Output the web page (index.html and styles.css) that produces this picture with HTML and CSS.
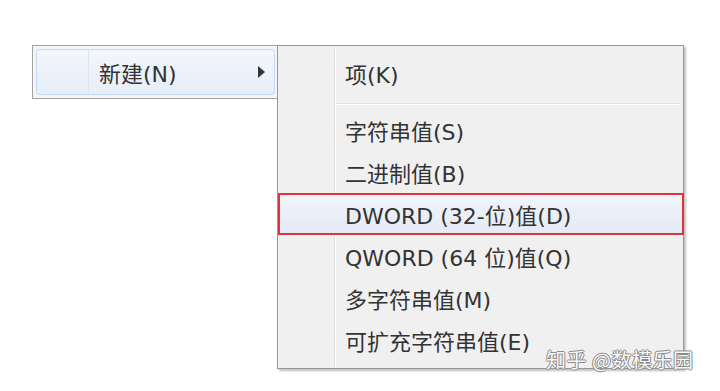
FILE: index.html
```html
<!DOCTYPE html>
<html lang="zh-CN">
<head>
    <meta charset="UTF-8">
    <meta name="viewport" content="width=device-width, initial-scale=1.0">
    <title>新建 菜单</title>
    <link rel="stylesheet" href="styles.css">
</head>
<body>
    <div class="stage">
        <!-- context menu -->
        <div class="menu">
            <div class="menu-item">
                <span class="icon-col"></span>
                <span class="label">新建(N)</span>
                <span class="arrow"></span>
            </div>
        </div>

        <!-- submenu -->
        <div class="submenu">
            <div class="sub-item">项(K)</div>
            <div class="sep"></div>
            <div class="sub-item">字符串值(S)</div>
            <div class="sub-item">二进制值(B)</div>
            <div class="sub-item selected">DWORD (32-位)值(D)</div>
            <div class="sub-item">QWORD (64 位)值(Q)</div>
            <div class="sub-item">多字符串值(M)</div>
            <div class="sub-item">可扩充字符串值(E)</div>
        </div>
    </div>

    <div class="watermark">知乎 @数模乐园</div>
</body>
</html>
```

FILE: styles.css
```css
body {
    margin: 0;
    background: #ffffff;
    font-family: "DejaVu Sans", "Noto Sans CJK SC", sans-serif;
    color: #333333;
    width: 720px;
    height: 391px;
    position: relative;
    overflow: hidden;
}
.stage {
    display: flex;
    align-items: flex-start;
    padding: 45px 0 0 32px;
}
.menu {
    width: 246px;
    height: 54px;
    box-sizing: border-box;
    border: 1px solid #a3a3a3;
    background: #f4f5f6;
    padding: 3px 2px 3px 3px;
}
.menu-item {
    height: 46px;
    box-sizing: border-box;
    border: 1px solid #c4daf3;
    border-radius: 3px;
    background: linear-gradient(#f3f7fc, #e6eef9);
    display: flex;
    align-items: center;
}
.icon-col {
    width: 51px;
    height: 100%;
    border-right: 1px solid #dbe5f1;
}
.menu-item .label {
    flex: 1;
    padding-left: 10px;
    font-size: 22px;
}
.arrow {
    width: 0;
    height: 0;
    border-left: 7px solid #333;
    border-top: 6px solid transparent;
    border-bottom: 6px solid transparent;
    margin-right: 9px;
}
.submenu {
    margin-left: -1px;
    width: 407px;
    height: 324px;
    box-sizing: border-box;
    border: 1px solid #979797;
    padding: 6px 0;
    background: linear-gradient(to right, #f0f0f0 56px, #e0e0e0 56px, #e0e0e0 57px, #ffffff 57px, #ffffff 58px, #f0f0f0 58px);
    box-shadow: 2px 2px 2px rgba(0, 0, 0, 0.25);
}
.sub-item {
    height: 42px;
    box-sizing: border-box;
    padding-left: 67px;
    display: flex;
    align-items: center;
    font-size: 22px;
}
.sub-item.selected {
    border: 2px solid #e0343d;
    padding-left: 65px;
    margin-right: -1px;
    background: linear-gradient(#f0f4fa, #e4ebf5);
}
.sep {
    margin: 9px 3px 4px 58px;
    border-top: 1px solid #e0e0e0;
    border-bottom: 1px solid #ffffff;
}
.watermark {
    position: absolute;
    left: 546px;
    top: 345px;
    font-family: "Noto Sans CJK SC", sans-serif;
    font-size: 20px;
    letter-spacing: 0.5px;
    color: rgba(255, 255, 255, 0.95);
    text-shadow: -1px 0 #8a8a8a, 1px 0 #8a8a8a, 0 -1px #8a8a8a, 0 1px #8a8a8a;
    white-space: nowrap;
}
```
